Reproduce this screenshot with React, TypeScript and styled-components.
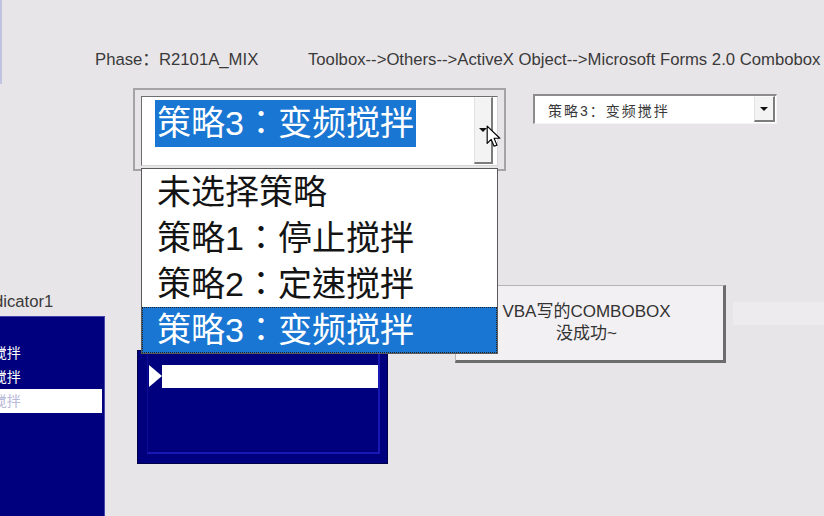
import styled, { createGlobalStyle } from "styled-components"

const GlobalStyle = createGlobalStyle`
  html, body {
    margin: 0;
    padding: 0;
    background: #e8e5e8;
  }
  body {
    font-family: "Liberation Sans", "Noto Sans CJK SC", Arial, sans-serif;
  }
`

const Screen = styled.div`
  position: relative;
  width: 824px;
  height: 516px;
  overflow: hidden;
  background: #e8e5e8;
  display: flex;
  flex-direction: column;
`

const TopBar = styled.div`
  display: flex;
  height: 88px;
  flex-shrink: 0;
`

const EdgeStrip = styled.div`
  width: 2px;
  height: 84px;
  background: #c2c2e2;
`

const Header = styled.div`
  display: flex;
  margin-left: 93px;
  padding-top: 51px;
`

const Caption = styled.span<{ $width?: number }>`
  display: inline-block;
  width: ${p => (p.$width ? `${p.$width}px` : "auto")};
  font-size: 16.7px;
  line-height: 18px;
  color: #3a3a3a;
  white-space: nowrap;
`

const ComboRow = styled.div`
  display: flex;
  align-items: flex-start;
  padding-left: 133px;
  height: 83px;
  flex-shrink: 0;
`

const BigCombo = styled.div`
  position: relative;
  z-index: 2;
  box-sizing: border-box;
  width: 373px;
  height: 83px;
  border: 2px solid #a4a4a4;
  padding: 6px 6px 3px 6px;
`

const BigField = styled.div`
  display: flex;
  box-sizing: border-box;
  height: 100%;
  background: #fff;
  border: 1px solid;
  border-color: #6e6e6e #d6d6d6 #d6d6d6 #6e6e6e;
`

const FieldText = styled.div`
  flex: 1;
  padding: 3px 0 0 13px;
`

const Selected = styled.span`
  display: inline-block;
  padding: 0 2px;
  font-family: "Liberation Sans", "Noto Sans CJK TC", sans-serif;
  font-size: 34px;
  line-height: 47px;
  color: #fff;
  background: #1976d2;
  white-space: nowrap;
`

const ArrowButton = styled.div<{ $width: number }>`
  display: flex;
  align-items: center;
  justify-content: center;
  box-sizing: border-box;
  width: ${p => p.$width}px;
  margin: 0 1px 1px 0;
  background: #f3f3f3;
  border-style: solid;
  border-width: 1px 2px 2px 1px;
  border-color: #fafafa #7c7c7c #7c7c7c #e2e2e2;
`

const DownTriangle = styled.span<{ $size: number }>`
  width: 0;
  height: 0;
  border-left: ${p => p.$size}px solid transparent;
  border-right: ${p => p.$size}px solid transparent;
  border-top: ${p => Math.round(p.$size * 0.9)}px solid #111;
`

const DropList = styled.ul`
  position: absolute;
  left: 6px;
  top: 78px;
  width: 357px;
  margin: 0;
  padding: 0;
  list-style: none;
  box-sizing: border-box;
  background: #fff;
  border: 1px solid #5a5a5a;
`

const DropItem = styled.li<{ $active?: boolean }>`
  height: 46px;
  line-height: 46px;
  padding-left: 15px;
  font-family: "Liberation Sans", "Noto Sans CJK TC", sans-serif;
  font-size: 34px;
  white-space: nowrap;
  color: ${p => (p.$active ? "#fff" : "#141414")};
  background: ${p => (p.$active ? "#1976d2" : "transparent")};
  outline: ${p => (p.$active ? "1px dotted #222" : "none")};
  outline-offset: -1px;
`

const Cursor = styled.svg`
  position: absolute;
  left: 351px;
  top: 35px;
`

const SmallCombo = styled.div`
  display: flex;
  box-sizing: border-box;
  width: 244px;
  height: 30px;
  margin: 6px 0 0 27px;
  background: #fff;
  border-style: solid;
  border-width: 2px 1px 1px 2px;
  border-color: #8c8c8c #f5f5f5 #f5f5f5 #8c8c8c;
`

const SmallText = styled.div`
  flex: 1;
  padding: 1px 0 0 13px;
  font-size: 14px;
  line-height: 28px;
  letter-spacing: 2px;
  color: #383838;
  white-space: nowrap;
`

const BottomRow = styled.div`
  display: flex;
  align-items: flex-start;
  flex: 1;
`

const IndicatorColumn = styled.div`
  flex-shrink: 0;
  width: 195px;
  margin: 122px 0 0 -90px;
`

const IndicatorLabel = styled.div`
  padding-left: 70px;
  margin-bottom: 5px;
  font-size: 16.7px;
  line-height: 18px;
  color: #3a3a3a;
  white-space: nowrap;
`

const IndicatorPanel = styled.ul`
  margin: 0;
  padding: 0 2px 0 0;
  list-style: none;
  height: 220px;
  background: #00007e;
  border: 1px solid #4444aa;
`

const IndicatorRow = styled.li<{ $active?: boolean }>`
  height: 24px;
  line-height: 24px;
  padding-left: 4px;
  font-size: 14px;
  white-space: nowrap;
  color: ${p => (p.$active ? "#b8b8d8" : "#fff")};
  background: ${p => (p.$active ? "#fff" : "transparent")};
`

const PointerPanel = styled.div`
  flex-shrink: 0;
  box-sizing: border-box;
  width: 251px;
  height: 114px;
  margin: 179px 0 0 32px;
  padding: 0 7px 9px 9px;
  background: #00007e;
  border: 1px solid #00004a;
`

const PointerFrame = styled.div`
  box-sizing: border-box;
  height: 100%;
  padding-top: 12px;
  border-style: solid;
  border-width: 2px 2px 2px 1px;
  border-color: #1414a4 #1818b4 #1818b4 #0c0c96;
`

const PointerRow = styled.div`
  display: flex;
  height: 23px;
  margin-left: 1px;
`

const PointerTip = styled.span`
  width: 0;
  height: 0;
  border-top: 11.5px solid transparent;
  border-bottom: 11.5px solid transparent;
  border-left: 13px solid #fff;
`

const PointerBar = styled.span`
  flex: 1;
  background: #fff;
`

const FaceButton = styled.button`
  flex-shrink: 0;
  box-sizing: border-box;
  width: 271px;
  height: 78px;
  margin: 114px 0 0 67px;
  padding: 0 6px 0 0;
  background: #f2f0f2;
  border-style: solid;
  border-width: 1px 3px 3px 1px;
  border-color: #b4b4b4 #6c6c6c #6c6c6c #b4b4b4;
  font-family: inherit;
  font-size: 17px;
  line-height: 22px;
  color: #333;
`

const GhostField = styled.div`
  flex: 1;
  height: 23px;
  margin: 131px 0 0 7px;
  background: #edebed;
`

const strategies = ["未选择策略", "策略1：停止搅拌", "策略2：定速搅拌", "策略3：变频搅拌"]

export default function App() {
  const current = 3

  return (
    <Screen>
      <GlobalStyle />
      <TopBar>
        <EdgeStrip />
        <Header>
          <Caption $width={213}>Phase：R2101A_MIX</Caption>
          <Caption>Toolbox--&gt;Others--&gt;ActiveX Object--&gt;Microsoft Forms 2.0 Combobox</Caption>
        </Header>
      </TopBar>

      <ComboRow>
        <BigCombo>
          <BigField>
            <FieldText>
              <Selected>{strategies[current]}</Selected>
            </FieldText>
            <ArrowButton $width={19} style={{ marginRight: 4 }}>
              <DownTriangle $size={4} />
            </ArrowButton>
          </BigField>
          <DropList>
            {strategies.map((s, i) => (
              <DropItem key={s} $active={i === current}>{s}</DropItem>
            ))}
          </DropList>
          <Cursor width="15" height="23" viewBox="0 0 13 20">
            <path
              d="M1 1 L1 16 L4.5 12.5 L7 18.5 L9.5 17.5 L7 11.5 L12 11.5 Z"
              fill="#fff"
              stroke="#000"
              strokeWidth="1"
              strokeLinejoin="round"
            />
          </Cursor>
        </BigCombo>

        <SmallCombo>
          <SmallText>{strategies[current]}</SmallText>
          <ArrowButton $width={21}>
            <DownTriangle $size={4} />
          </ArrowButton>
        </SmallCombo>
      </ComboRow>

      <BottomRow>
        <IndicatorColumn>
          <IndicatorLabel>Indicator1</IndicatorLabel>
          <IndicatorPanel>
            {strategies.map((s, i) => (
              <IndicatorRow key={s} $active={i === current}>{s}</IndicatorRow>
            ))}
          </IndicatorPanel>
        </IndicatorColumn>

        <PointerPanel>
          <PointerFrame>
            <PointerRow>
              <PointerTip />
              <PointerBar />
            </PointerRow>
          </PointerFrame>
        </PointerPanel>

        <FaceButton>
          VBA写的COMBOBOX
          <br />
          没成功~
        </FaceButton>

        <GhostField />
      </BottomRow>
    </Screen>
  )
}
